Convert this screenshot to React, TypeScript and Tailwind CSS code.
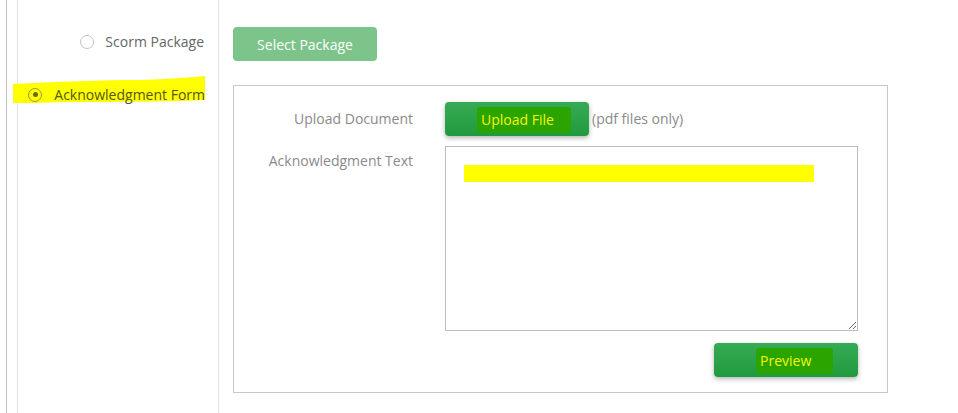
import React from 'react'

const font = { fontFamily: '"Open Sans", "Noto Sans", sans-serif' }

function Radio({ checked }: { checked?: boolean }) {
  return (
    <span
      className={`flex h-[14px] w-[14px] shrink-0 items-center justify-center rounded-full border ${checked ? 'border-[#9a9a40]' : 'border-[#c4c4c4] bg-white'}`}
    >
      {checked && <span className="h-[5px] w-[5px] rounded-full bg-[#6b6b10]" />}
    </span>
  )
}

function MarkerText({ label, right }: { label: string; right: number }) {
  return (
    <span className="relative inline-block text-[#f4f700]">
      <span
        className="absolute top-[-2px] bottom-[-3px] left-[-4px] rounded-[3px] bg-[#2ba400]"
        style={{ right: -right }}
      />
      <span className="relative">{label}</span>
    </span>
  )
}

export default function App() {
  return (
    <div className="flex h-[413px] w-[958px] overflow-hidden bg-white text-[14px]" style={font}>
      <div className="w-[6px] shrink-0" />
      <div className="w-[11px] shrink-0 border-l border-[#c2c2c2]" />
      <div className="w-[202px] shrink-0 border-x border-x-[#e2e2e2]">
        <div className="flex items-center justify-end gap-[11px] pt-[31px] pr-[14px] text-[#666]">
          <Radio />
          <span>Scorm Package</span>
        </div>
        <div className="relative mt-[32px] ml-[-5px] flex items-center justify-end gap-[12px] pr-[13px] text-[#55551a]">
          <svg className="absolute top-[-8px] left-0 h-[28px] w-[193px]" viewBox="0 0 193 28">
            <path d="M0 8 C40 6 90 4 130 4 C160 3 180 1 192 0 L192 24 C150 26 90 26 50 26 C30 27 10 27 0 27 Z" fill="#ffff00" />
          </svg>
          <span className="relative"><Radio checked /></span>
          <span className="relative">Acknowledgment Form</span>
        </div>
      </div>

      <div className="flex-1 pt-[27px] pl-[14px]">
        <button className="h-[34px] w-[144px] rounded-[4px] bg-[#7cc48a] text-[14px] text-white">
          Select Package
        </button>

        <div className="mt-[24px] h-[308px] w-[655px] border border-[#c8c8c8] pt-[16px] pb-[14px]">
          <div className="flex items-center">
            <div className="w-[180px] pr-[1px] pb-[2px] text-right text-[#8a8a8a]">Upload Document</div>
            <button className="ml-[31px] flex h-[34px] w-[144px] items-center rounded-[4px] bg-gradient-to-b from-[#36aa55] to-[#209a3d] pl-[36px] text-[14px] shadow-[0_2px_5px_rgba(0,0,0,0.3)]">
              <MarkerText label="Upload File" right={17} />
            </button>
            <span className="ml-[3px] pb-[2px] text-[#8a8a8a]">(pdf files only)</span>
          </div>

          <div className="mt-[10px] flex">
            <div className="w-[180px] pt-[4px] pr-[1px] text-right text-[#8a8a8a]">Acknowledgment Text</div>
            <div className="relative ml-[31px]">
              <textarea className="block h-[185px] w-[413px] border border-[#bdbdbd] outline-none" />
              <div className="absolute top-[19px] left-[19px] h-[17px] w-[350px] bg-[#ffff00]" />
            </div>
          </div>

          <div className="mt-[12px] flex justify-end pr-[29px]">
            <button className="flex h-[34px] w-[144px] items-center rounded-[4px] bg-gradient-to-b from-[#36aa55] to-[#209a3d] pl-[46px] text-[14px] shadow-[0_2px_5px_rgba(0,0,0,0.3)]">
              <MarkerText label="Preview" right={22} />
            </button>
          </div>
        </div>
      </div>
    </div>
  )
}
